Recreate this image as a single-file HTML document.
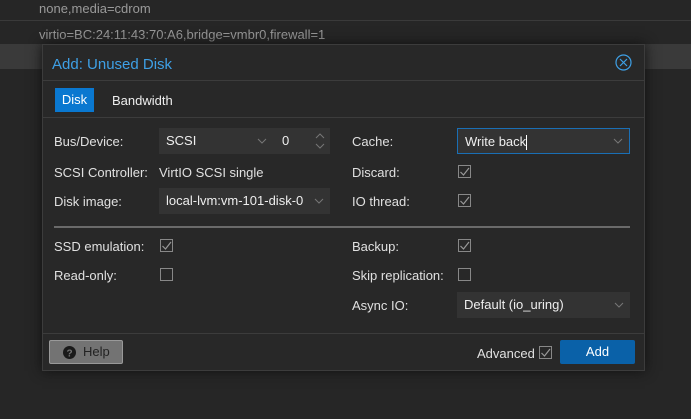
<!DOCTYPE html><html><head><style>
body{margin:0;width:691px;height:419px;background:#262626;font-family:"Liberation Sans",sans-serif;font-size:13px;color:#e0e0e0;position:relative;overflow:hidden}
.a{position:absolute}
.row{position:absolute;left:0;width:691px;height:24px;border-bottom:1px solid #3a3a3a;color:#9a9a9a}
.lbl{position:absolute;color:#e0e0e0}
.inp{position:absolute;background:#333;height:26px;line-height:26px;padding-left:7px;box-sizing:border-box;color:#eee}
.cb{position:absolute;width:11px;height:11px;border:1px solid #888;}
.cb svg{position:absolute;left:0;top:0}
.arr{position:absolute;right:6px;top:10px}
</style></head><body>
<div class="row" style="top:-4px;"><span class="a" style="left:39px;top:5px">none,media=cdrom</span></div>
<div class="row" style="top:20px;"><span class="a" style="left:39px;top:7px">virtio=BC:24:11:43:70:A6,bridge=vmbr0,firewall=1</span></div>
<div class="row" style="top:45px;background:#3a3a3a;height:23px"></div>
<div class="a" style="left:42px;top:44px;width:603px;height:327px;background:#282828;border:1px solid #3c3c3c;box-sizing:border-box;box-shadow:0 0 12px #111">
<div class="a" style="left:9px;top:11px;font-size:15px;color:#3ea0e6">Add: Unused Disk</div>
<svg class="a" style="left:572px;top:9px" width="17" height="17"><circle cx="8.5" cy="8.5" r="7.5" fill="none" stroke="#3ea0e6" stroke-width="1.2"/><path d="M5 5L12 12M12 5L5 12" stroke="#3ea0e6" stroke-width="1.2"/></svg>
<div class="a" style="left:0;top:35px;width:601px;border-top:1px solid #3c3c3c"></div>
<div class="a" style="left:12px;top:43px;width:39px;height:24px;background:#0a78d0;color:#fff;line-height:24px;text-align:center">Disk</div>
<div class="a" style="left:69px;top:48px;color:#eee">Bandwidth</div>
<div class="a" style="left:0;top:72px;width:601px;border-top:1px solid #3c3c3c"></div>
<div class="a" style="left:0;top:288px;width:601px;border-top:1px solid #3c3c3c"></div>
</div>
<div class="lbl" style="left:54px;top:134px">Bus/Device:</div>
<div class="inp" style="left:159px;top:128px;width:171px">SCSI<svg class="a" style="left:98px;top:10px" width="10" height="6"><path d="M1 1L5 5L9 1" fill="none" stroke="#777"/></svg><span class="a" style="left:123px">0</span><svg class="a" style="left:156px;top:5px" width="10" height="16"><path d="M1 5L5 1L9 5M1 11L5 15L9 11" fill="none" stroke="#777"/></svg></div>
<div class="lbl" style="left:54px;top:165px">SCSI Controller:</div>
<div class="lbl" style="left:159px;top:165px">VirtIO SCSI single</div>
<div class="lbl" style="left:54px;top:194px">Disk image:</div>
<div class="inp" style="left:159px;top:188px;width:171px">local-lvm:vm-101-disk-0<svg class="arr" width="10" height="6"><path d="M1 1L5 5L9 1" fill="none" stroke="#777"/></svg></div>
<div class="a" style="left:54px;top:226px;width:576px;border-top:2px solid #6a6a6a"></div>
<div class="lbl" style="left:54px;top:239px">SSD emulation:</div>
<div class="lbl" style="left:54px;top:268px">Read-only:</div>
<div class="lbl" style="left:352px;top:134px">Cache:</div>
<div class="inp" style="left:457px;top:128px;width:173px;height:26px;border:1px solid #1a6fb5">Write back<span style="border-left:1px solid #fff;height:15px;display:inline-block;vertical-align:middle"></span><svg class="arr" width="10" height="6" style="top:9px"><path d="M1 1L5 5L9 1" fill="none" stroke="#777"/></svg></div>
<div class="lbl" style="left:352px;top:165px">Discard:</div>
<div class="lbl" style="left:352px;top:194px">IO thread:</div>
<div class="lbl" style="left:352px;top:239px">Backup:</div>
<div class="lbl" style="left:352px;top:268px">Skip replication:</div>
<div class="lbl" style="left:352px;top:298px">Async IO:</div>
<div class="inp" style="left:457px;top:292px;width:173px">Default (io_uring)<svg class="arr" width="10" height="6"><path d="M1 1L5 5L9 1" fill="none" stroke="#777"/></svg></div>
<div class="cb" style="left:160px;top:239px"><svg width="11" height="11"><path d="M1.5 6L4.5 9L10 2" fill="none" stroke="#999" stroke-width="1.2"/></svg></div>
<div class="cb" style="left:160px;top:268px"></div>
<div class="cb" style="left:458px;top:165px"><svg width="11" height="11"><path d="M1.5 6L4.5 9L10 2" fill="none" stroke="#999" stroke-width="1.2"/></svg></div>
<div class="cb" style="left:458px;top:194px"><svg width="11" height="11"><path d="M1.5 6L4.5 9L10 2" fill="none" stroke="#999" stroke-width="1.2"/></svg></div>
<div class="cb" style="left:458px;top:239px"><svg width="11" height="11"><path d="M1.5 6L4.5 9L10 2" fill="none" stroke="#999" stroke-width="1.2"/></svg></div>
<div class="cb" style="left:458px;top:268px"></div>
<div class="a" style="left:49px;top:340px;width:74px;height:24px;background:#737373;border:1px solid #999;box-sizing:border-box;border-radius:2px;color:#222;line-height:22px"><svg class="a" style="left:13px;top:5px" width="13" height="13"><circle cx="6.5" cy="6.5" r="6.5" fill="#1a1a1a"/><text x="6.5" y="10.5" font-size="10" font-weight="bold" text-anchor="middle" fill="#737373" font-family="Liberation Sans">?</text></svg><span class="a" style="left:33px">Help</span></div>
<div class="lbl" style="left:477px;top:346px">Advanced</div>
<div class="cb" style="left:539px;top:346px"><svg width="11" height="11"><path d="M1.5 6L4.5 9L10 2" fill="none" stroke="#999" stroke-width="1.2"/></svg></div>
<div class="a" style="left:560px;top:340px;width:75px;height:24px;background:#0a61a8;border-radius:2px;color:#fff;text-align:center;line-height:24px">Add</div>
</body></html>
